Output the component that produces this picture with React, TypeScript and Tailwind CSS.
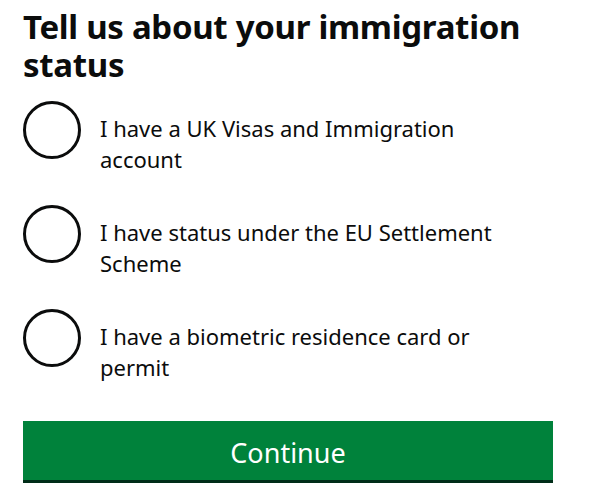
const options = [
  'I have a UK Visas and Immigration account',
  'I have status under the EU Settlement Scheme',
  'I have a biometric residence card or permit',
];

export default function App() {
  return (
    <div className="min-h-[497px] w-[600px] bg-white pl-[23px] pr-[47px] pt-[8px] text-[#0b0c0c] font-['Noto_Sans',sans-serif]">
      <h1 className="text-[33px] font-bold leading-[38px] tracking-[-0.3px]">
        Tell us about your immigration status
      </h1>
      <div className="mt-[17px] flex flex-col gap-[30px]">
        {options.map(label => (
          <label key={label} className="flex items-start gap-[19px] pr-[15px]">
            <span className="h-[58px] w-[58px] shrink-0 rounded-full border-[3px] border-[#0b0c0c]" />
            <span className="pt-[12px] text-[22px] leading-[31px]">{label}</span>
          </label>
        ))}
      </div>
      <button className="mt-[38px] h-[59px] w-full bg-[#00823b] pt-[5px] text-[27px] text-white shadow-[0_3px_0_#002d18]">
        Continue
      </button>
    </div>
  );
}
